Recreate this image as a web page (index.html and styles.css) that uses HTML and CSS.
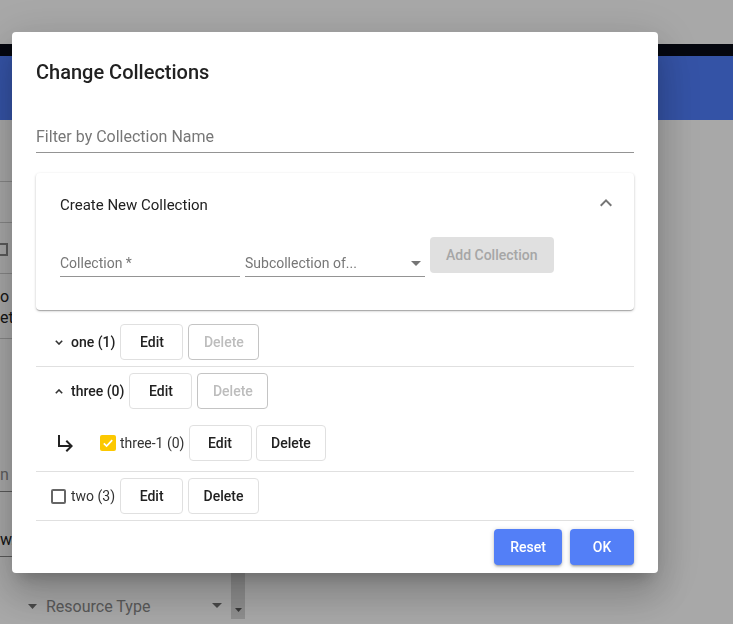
FILE: index.html
```html
<!DOCTYPE html>
<html lang="en">
<head>
    <meta charset="UTF-8">
    <meta name="viewport" content="width=device-width, initial-scale=1.0">
    <title>Change Collections</title>
    <link rel="stylesheet" href="styles.css">
</head>
<body>
    <div class="app">
        <div class="app-top"></div>
        <div class="app-strip"></div>
        <div class="app-bar"></div>
        <div class="app-main">
            <aside class="sidebar">
                <div class="side-item side-a"></div>
                <div class="side-item side-b"></div>
                <div class="side-item side-c"><span class="side-icon"></span></div>
                <div class="side-item side-d">
                    <p>o the collection</p>
                    <p>et of resources</p>
                </div>
                <div class="side-field side-e">n value</div>
                <div class="side-field side-f">w. value</div>
                <div class="side-resource">
                    <div class="res-select">
                        <svg width="9" height="5" viewBox="0 0 9 5"><path d="M0 0h9L4.5 5z" fill="#6e6e6e"/></svg>
                        <span class="res-label">Resource Type</span>
                        <svg class="res-caret" width="10" height="5" viewBox="0 0 10 5"><path d="M0 0h10L5 5z" fill="#6e6e6e"/></svg>
                    </div>
                    <div class="res-track">
                        <svg width="7" height="4" viewBox="0 0 7 4"><path d="M0 0h7L3.5 4z" fill="#555"/></svg>
                    </div>
                </div>
            </aside>
        </div>
    </div>

    <div class="backdrop">
        <div class="dialog">
            <h2 class="dialog-title">Change Collections</h2>
            <div class="dialog-content">
                <input class="filter" type="text" placeholder="Filter by Collection Name">

                <div class="card">
                    <div class="card-head">
                        <span>Create New Collection</span>
                        <svg class="card-toggle" width="24" height="24" viewBox="0 0 24 24"><path d="M12 8l-6 6 1.41 1.41L12 10.83l4.59 4.58L18 14z" fill="#757575"/></svg>
                    </div>
                    <div class="card-body">
                        <div class="field">Collection *</div>
                        <div class="field field-select">
                            <span>Subcollection of...</span>
                            <svg width="10" height="5" viewBox="0 0 10 5"><path d="M0 0h10L5 5z" fill="#757575"/></svg>
                        </div>
                        <button class="btn-add" disabled>Add Collection</button>
                    </div>
                </div>

                <div class="collections">
                    <div class="row">
                        <div class="row-line">
                            <span class="toggle">
                                <svg width="8" height="5" viewBox="0 0 8 5"><polyline points="0.8,0.8 4,4 7.2,0.8" fill="none" stroke="#333" stroke-width="1.6"/></svg>
                            </span>
                            <span class="name name-parent">one (1)</span>
                            <button class="btn">Edit</button>
                            <button class="btn" disabled>Delete</button>
                        </div>
                    </div>
                    <div class="row row-open">
                        <div class="row-line">
                            <span class="toggle">
                                <svg width="8" height="5" viewBox="0 0 8 5"><polyline points="0.8,4.2 4,1 7.2,4.2" fill="none" stroke="#333" stroke-width="1.6"/></svg>
                            </span>
                            <span class="name name-parent">three (0)</span>
                            <button class="btn">Edit</button>
                            <button class="btn" disabled>Delete</button>
                        </div>
                        <div class="sub-line">
                            <svg class="sub-arrow" width="24" height="24" viewBox="0 0 24 24"><path d="M19 15l-6 6-1.42-1.42L15.17 16H4V4h2v10h9.17l-3.59-3.58L13 9l6 6z" fill="#222"/></svg>
                            <span class="check check-on">
                                <svg width="16" height="16" viewBox="0 0 16 16"><polyline points="3.8,8.3 6.6,11 12.2,5.2" fill="none" stroke="#fff" stroke-width="1.7"/></svg>
                            </span>
                            <span class="name">three-1 (0)</span>
                            <button class="btn">Edit</button>
                            <button class="btn">Delete</button>
                        </div>
                    </div>
                    <div class="row">
                        <div class="row-line">
                            <span class="toggle"><span class="check"></span></span>
                            <span class="name">two (3)</span>
                            <button class="btn">Edit</button>
                            <button class="btn">Delete</button>
                        </div>
                    </div>
                </div>
            </div>
            <div class="dialog-actions">
                <button class="btn-primary">Reset</button>
                <button class="btn-primary">OK</button>
            </div>
        </div>
    </div>
</body>
</html>
```

FILE: styles.css
```css
body {
    margin: 0;
    font-family: Roboto, 'Liberation Sans', sans-serif;
    background-color: #fff;
    color: #212121;
    overflow: hidden;
}
.app-top {
    height: 44px;
}
.app-strip {
    height: 12px;
    background-color: #080b17;
}
.app-bar {
    height: 64px;
    background-color: #507efc;
}
.app-main {
    display: flex;
}
.sidebar {
    width: 245px;
}
.side-item {
    border-bottom: 1px solid #cdcdcd;
}
.side-a {
    height: 61px;
}
.side-b {
    height: 40px;
}
.side-c {
    height: 30px;
    padding-top: 20px;
}
.side-icon {
    display: block;
    width: 6px;
    height: 9px;
    border: 2px solid #8a8a8a;
    border-left: none;
}
.side-d {
    height: 52px;
    padding-top: 12px;
    font-size: 16px;
    line-height: 21px;
    color: #222;
}
.side-d p {
    margin: 0;
    white-space: nowrap;
}
.side-field {
    padding: 6px 0 7px;
    font-size: 16px;
    line-height: 19px;
    border-bottom: 1px solid #888;
    white-space: nowrap;
}
.side-e {
    margin-top: 120px;
    color: #8f8f8f;
}
.side-f {
    margin-top: 32px;
    color: #222;
}
.side-resource {
    display: flex;
    margin-top: 16px;
    height: 46px;
}
.res-select {
    width: 231px;
    box-sizing: border-box;
    padding: 24px 9px 0 28px;
    display: flex;
    align-items: center;
    height: 43px;
    font-size: 16px;
    color: #888;
}
.res-label {
    margin-left: 9px;
}
.res-caret {
    margin-left: auto;
    margin-top: -2px;
}
.res-track {
    width: 14px;
    background-color: #d8d8d8;
    display: flex;
    align-items: flex-end;
    justify-content: center;
    padding-bottom: 7px;
    box-sizing: border-box;
}

.backdrop {
    position: fixed;
    top: 0;
    left: 0;
    right: 0;
    bottom: 0;
    background-color: rgba(0, 0, 0, 0.34);
    padding: 32px 0 0 12px;
}
.dialog {
    width: 646px;
    background-color: #fff;
    border-radius: 4px;
    box-shadow: 0 11px 15px -7px rgba(0, 0, 0, 0.2), 0 24px 38px 3px rgba(0, 0, 0, 0.14), 0 9px 46px 8px rgba(0, 0, 0, 0.12);
}
.dialog-title {
    margin: 0;
    padding: 24px 24px 0;
    font-size: 20px;
    font-weight: 500;
    line-height: 32px;
    color: #212121;
}
.dialog-content {
    padding: 0 24px;
}
.filter {
    display: block;
    width: 100%;
    box-sizing: border-box;
    margin: 32px 0 0;
    padding: 7px 0 6px;
    border: none;
    border-bottom: 1px solid #949494;
    font-family: inherit;
    font-size: 16px;
    line-height: 19px;
    height: 33px;
    outline: none;
}
.filter::placeholder {
    color: #777;
    opacity: 1;
}
.card {
    margin-top: 20px;
    border-radius: 4px;
    box-shadow: 0 1px 3px rgba(0, 0, 0, 0.2), 0 1px 1px rgba(0, 0, 0, 0.14), 0 2px 1px -1px rgba(0, 0, 0, 0.12);
}
.card-head {
    height: 64px;
    padding: 0 16px 0 24px;
    display: flex;
    align-items: center;
    justify-content: space-between;
    font-size: 15px;
    color: #212121;
}
.card-toggle {
    margin-bottom: 4px;
}
.card-body {
    display: flex;
    align-items: flex-start;
    gap: 5px;
    padding: 0 24px 33px;
}
.field {
    width: 180px;
    height: 19px;
    padding: 17px 0 3px;
    border-bottom: 1px solid #949494;
    font-size: 14px;
    line-height: 19px;
    color: #777;
}
.field-select {
    display: flex;
    justify-content: space-between;
    align-items: center;
}
.field-select svg {
    margin-right: 4px;
}
.btn-add {
    height: 36px;
    padding: 0 16px;
    border: none;
    border-radius: 4px;
    background-color: #e0e0e0;
    color: #a6a6a6;
    font-family: inherit;
    font-size: 14px;
    font-weight: 500;
}
.collections {
    margin-top: 8px;
}
.row {
    padding: 6px 0;
    border-bottom: 1px solid #e0e0e0;
}
.row-open {
    padding-bottom: 10px;
}
.row-line,
.sub-line {
    display: flex;
    align-items: center;
    gap: 5px;
    padding-left: 14px;
}
.sub-line {
    margin-top: 16px;
    padding-left: 18px;
    gap: 4px;
}
.toggle {
    width: 17px;
    display: flex;
    justify-content: center;
    margin-right: -1px;
}
.name {
    font-size: 14px;
    color: #333;
}
.name-parent {
    font-weight: 500;
    color: #212121;
}
.check {
    display: block;
    width: 11px;
    height: 11px;
    border: 2px solid #666;
    border-radius: 2px;
}
.check-on {
    width: 16px;
    height: 16px;
    border: none;
    background-color: #fcc800;
    margin-left: 18px;
}
.check-on svg {
    display: block;
}
.btn {
    height: 36px;
    min-width: 63px;
    padding: 0 14.5px;
    border: 1px solid #e0e0e0;
    border-radius: 4px;
    background-color: #fff;
    color: #212121;
    font-family: inherit;
    font-size: 14px;
    font-weight: 500;
}
.btn:disabled {
    color: #bdbdbd;
    border-color: #c4c4c4;
}
.dialog-actions {
    display: flex;
    justify-content: flex-end;
    gap: 8px;
    padding: 8px 24px;
}
.btn-primary {
    height: 36px;
    min-width: 64px;
    padding: 0 16px;
    border: none;
    border-radius: 4px;
    background-color: #537ff7;
    color: #fff;
    font-family: inherit;
    font-size: 14px;
    font-weight: 500;
    box-shadow: 0 1px 5px rgba(0, 0, 0, 0.2), 0 2px 2px rgba(0, 0, 0, 0.14), 0 3px 1px -2px rgba(0, 0, 0, 0.12);
}
```
